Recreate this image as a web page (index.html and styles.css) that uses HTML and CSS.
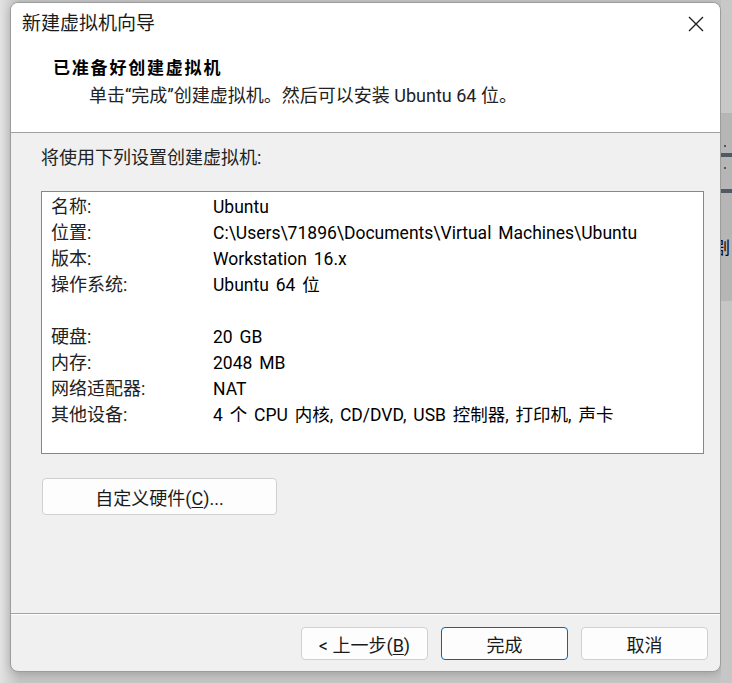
FILE: index.html
```html
<!DOCTYPE html>
<html lang="zh-CN">
<head>
<meta charset="utf-8">
<title>新建虚拟机向导</title>
<link rel="stylesheet" href="styles.css">
</head>
<body>
<div class="screen">
  <div class="window">
    <div class="titlebar">
      <span class="title">新建虚拟机向导</span>
      <svg class="close" width="16" height="16" viewBox="0 0 16 16"><path d="M1 1 L15 15 M15 1 L1 15" stroke="#1a1a1a" stroke-width="1.3" fill="none"/></svg>
    </div>
    <div class="header">
      <div class="heading">已准备好创建虚拟机</div>
      <div class="subtitle">单击“完成”创建虚拟机。然后可以安装 Ubuntu 64 位。</div>
    </div>
    <div class="body">
      <div class="intro">将使用下列设置创建虚拟机:</div>
      <div class="summary">
        <div class="row"><span class="label">名称:</span><span class="value">Ubuntu</span></div>
        <div class="row"><span class="label">位置:</span><span class="value">C:\Users\71896\Documents\Virtual Machines\Ubuntu</span></div>
        <div class="row"><span class="label">版本:</span><span class="value">Workstation 16.x</span></div>
        <div class="row"><span class="label">操作系统:</span><span class="value">Ubuntu 64 位</span></div>
        <div class="row"></div>
        <div class="row"><span class="label">硬盘:</span><span class="value">20 GB</span></div>
        <div class="row"><span class="label">内存:</span><span class="value">2048 MB</span></div>
        <div class="row"><span class="label">网络适配器:</span><span class="value">NAT</span></div>
        <div class="row"><span class="label">其他设备:</span><span class="value">4 个 CPU 内核, CD/DVD, USB 控制器, 打印机, 声卡</span></div>
      </div>
      <button class="btn custom">自定义硬件(<u>C</u>)...</button>
    </div>
    <div class="footer">
      <button class="btn">&lt; 上一步(<u>B</u>)</button>
      <button class="btn default">完成</button>
      <button class="btn">取消</button>
    </div>
  </div>
  <div class="behind">
    <div class="b-top"></div>
    <div class="b-mid">
      <div class="dot"></div>
      <div class="bar"></div>
      <div class="dot dot2"></div>
      <div class="bar bar2"></div>
      <div class="b-text">剧</div>
    </div>
    <div class="b-low"></div>
  </div>
</div>
</body>
</html>
```
FILE: styles.css
```css
html, body {
  margin: 0;
  padding: 0;
}
body {
  width: 732px;
  height: 683px;
  overflow: hidden;
  background: #c4c4c4;
  font-family: Roboto, "Noto Sans CJK SC", sans-serif;
  font-size: 18px;
  color: #000;
}
.screen {
  display: flex;
  align-items: flex-start;
  height: 683px;
  background: linear-gradient(to right, #e2e2e2 0px, #d2d2d2 10px, #c4c4c4 20px);
}
.window {
  box-sizing: border-box;
  margin-top: 2px;
  margin-left: 10px;
  width: 711px;
  height: 670px;
  border: 1px solid #9c9c9c;
  border-radius: 8px;
  background: #f0f0f0;
  overflow: hidden;
  display: flex;
  flex-direction: column;
  box-shadow: 0 2px 8px rgba(0,0,0,0.18);
}
.titlebar {
  height: 41px;
  flex: none;
  background: #fff;
  display: flex;
  align-items: center;
  justify-content: space-between;
  padding: 0 16px 0 11px;
}
.title {
  font-size: 19px;
  line-height: 22px;
  color: #1a1a1a;
}
.close {
  display: block;
}
.header {
  flex: none;
  height: 89px;
  background: #fff;
  border-bottom: 1px solid #a0a0a0;
  padding: 13px 0 0 42px;
  box-sizing: border-box;
}
.heading {
  font-weight: bold;
  font-size: 17px;
  line-height: 22px;
  letter-spacing: 1.8px;
}
.subtitle {
  margin-top: 6px;
  padding-left: 36px;
  line-height: 22px;
  color: #222;
}
.body {
  flex: 1;
  padding: 14px 0 0 30px;
}
.intro {
  line-height: 22px;
  color: #222;
}
.summary {
  box-sizing: border-box;
  margin-top: 22px;
  width: 663px;
  height: 263px;
  background: #fff;
  border: 1px solid #828790;
  padding: 2px 0 0 9px;
}
.row {
  display: flex;
  height: 26px;
  line-height: 26px;
  white-space: nowrap;
}
.label {
  width: 162px;
  flex: none;
  color: #222;
}
.value {
  font-size: 17.5px;
  word-spacing: 2.5px;
}
.btn {
  box-sizing: border-box;
  font: inherit;
  color: #1a1a1a;
  background: #fdfdfd;
  border: 1px solid #d0d0d0;
  border-radius: 4px;
  padding: 0;
  width: 127px;
  height: 33px;
}
.btn u {
  text-decoration-thickness: 1px;
  text-underline-offset: 2px;
}
.custom {
  margin-top: 24px;
  margin-left: 1px;
  width: 235px;
  height: 37px;
}
.footer {
  flex: none;
  height: 58px;
  box-sizing: border-box;
  border-top: 1px solid #a0a0a0;
  box-shadow: inset 0 1px 0 #fff;
  display: flex;
  justify-content: flex-end;
  gap: 13px;
  padding: 13px 12px 0 0;
}
.default {
  border-color: #0067c0;
}
.behind {
  width: 11px;
  height: 683px;
  display: flex;
  flex-direction: column;
  overflow: hidden;
}
.b-top {
  height: 113px;
  background: #c8c8c8;
}
.b-mid {
  height: 188px;
  background: #b6b6b6;
  display: flex;
  flex-direction: column;
}
.dot {
  margin: 32px 0 0 3px;
  width: 2px;
  height: 2px;
  background: #555;
}
.dot2 {
  margin-top: 10px;
}
.bar {
  margin-top: 6px;
  height: 4px;
  background: #4f5a64;
}
.bar2 {
  margin-top: 20px;
}
.b-text {
  margin-top: 45px;
  margin-left: -8px;
  font-size: 17px;
  line-height: 20px;
}
.b-low {
  flex: 1;
  background: #c6c6c6;
}
```
